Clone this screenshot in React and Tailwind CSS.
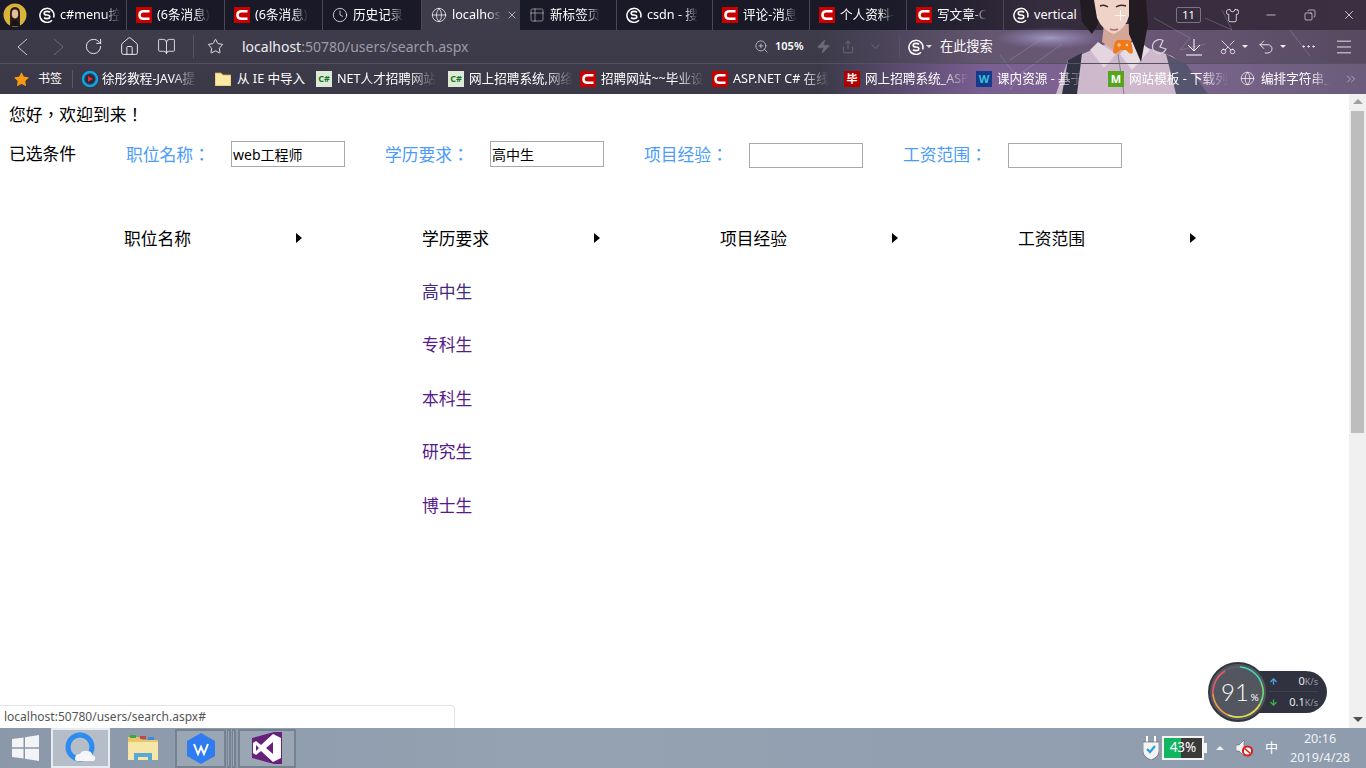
import React from "react";
import {
  ChevronDown,
  ChevronsRight,
  RotateCw,
  Home,
  BookOpen,
  Star,
  ZoomIn,
  Zap,
  Share,
  Scissors,
  Undo2,
  Ellipsis,
  Menu,
  Shirt,
  Minus,
  Copy,
  X,
  Plus,
  Globe,
  Clock,
  Table2,
  ArrowUp,
  ArrowDown,
} from "lucide-react";

const font = "font-['Noto_Sans','Noto_Sans_CJK_SC',sans-serif]";
const cjkTc = "font-['Noto_Sans_CJK_TC',sans-serif]";
const fade = "[mask-image:linear-gradient(90deg,#000_72%,transparent)]";

function CLogo() {
  return (
    <svg width="16" height="16" viewBox="0 0 16 16" className="shrink-0">
      <rect width="16" height="16" fill="#c90000" />
      <path d="M13.5 4.2H7.5Q3.5 4.2 3.5 8T7.5 11.8H13.5" fill="none" stroke="#fff" strokeWidth="2.6" />
    </svg>
  );
}

function SogouLogo() {
  return (
    <svg width="16" height="16" viewBox="0 0 16 16" className="shrink-0">
      <path d="M13 13.2A7 7 0 1 1 14.6 10.5" fill="none" stroke="#fff" strokeWidth="1.5" />
      <path d="M11 5.4Q10 4.4 8 4.4Q5.2 4.4 5.2 6.2T8 8T10.8 9.8T8 11.6Q6 11.6 5 10.6" fill="none" stroke="#fff" strokeWidth="1.6" />
    </svg>
  );
}

function Tab({ icon, text, active, width }) {
  return (
    <div
      className={`flex h-full shrink-0 items-center gap-[5px] border-r pl-[9px] text-[12.6px] text-white ${width} ${
        active ? "border-transparent bg-[#3e3c4b]" : "border-[#4a4855]"
      }`}
    >
      {icon}
      <span className={`whitespace-nowrap ${fade}`}>{text}</span>
      {active && <X size={12} strokeWidth={1.2} className="mr-[7px] ml-auto shrink-0" />}
    </div>
  );
}

function Avatar() {
  return (
    <svg width="24" height="24" viewBox="0 0 24 24" className="mx-[3px] shrink-0">
      <circle cx="12" cy="12" r="11.5" fill="#d8b43a" />
      <path d="M7 23V10Q7 4 12 4T17 10V23Z" fill="#2c2018" />
      <ellipse cx="12" cy="11" rx="3.2" ry="4.4" fill="#e7bda0" />
      <path d="M8 23L9.5 17H14.5L16 23Z" fill="#1a1416" />
    </svg>
  );
}

function Tabs() {
  return (
    <div className="flex h-[30px] items-center">
      <Avatar />
      <Tab width="w-[97px]" icon={<SogouLogo />} text="c#menu控" />
      <Tab width="w-[98px]" icon={<CLogo />} text="(6条消息)" />
      <Tab width="w-[98px]" icon={<CLogo />} text="(6条消息)" />
      <Tab width="w-[99px]" icon={<Clock size={16} strokeWidth={1.1} className="shrink-0" />} text="历史记录" />
      <Tab width="w-[98px]" active icon={<Globe size={16} strokeWidth={1.1} className="shrink-0" />} text="localhos" />
      <Tab width="w-[97px]" icon={<Table2 size={16} strokeWidth={1} className="shrink-0 opacity-70" />} text="新标签页" />
      <Tab width="w-[96px]" icon={<SogouLogo />} text="csdn - 搜" />
      <Tab width="w-[97px]" icon={<CLogo />} text="评论-消息" />
      <Tab width="w-[97px]" icon={<CLogo />} text="个人资料-" />
      <Tab width="w-[97px]" icon={<CLogo />} text="写文章-C" />
      <div className="flex h-full w-[97px] shrink-0 items-center gap-[5px] pl-[9px] text-[12.6px] text-white">
        <SogouLogo />
        <span className="whitespace-nowrap">vertical</span>
      </div>
      <Plus size={17} strokeWidth={1.2} className="ml-[11px] shrink-0 text-white" />
      <div className="ml-[47px] flex h-[16px] w-[25px] items-center justify-center rounded-[2px] border border-[#7d7385] text-[11px] text-white">
        11
      </div>
      <Shirt size={15} strokeWidth={1.2} className="ml-[24px] text-white" />
      <Minus size={14} strokeWidth={1.1} className="ml-[24px] text-white" />
      <Copy size={12} strokeWidth={1.2} className="ml-[26px] -scale-x-100 text-white" />
      <X size={14} strokeWidth={1.2} className="ml-[26px] text-white" />
    </div>
  );
}

function Chevron({ flip, className }) {
  return (
    <svg width="11" height="18" viewBox="0 0 11 18" className={className}>
      <path d={flip ? "M1 1L10 9L1 17" : "M10 1L1 9L10 17"} fill="none" stroke="currentColor" strokeWidth="1" />
    </svg>
  );
}

function Toolbar() {
  return (
    <div className="flex h-[34px] items-center border-b border-[#55535f] text-white">
      <Chevron className="ml-[17px] text-[#c8c8ce]" />
      <Chevron flip className="ml-[25px] text-[#6a6a74]" />
      <RotateCw size={19} strokeWidth={1.1} className="ml-[20px]" />
      <Home size={21} strokeWidth={1} className="ml-[16px]" />
      <BookOpen size={19} strokeWidth={1} className="ml-[17px]" />
      <div className="ml-[17px] h-[23px] w-px bg-[#55535f]" />
      <Star size={17} strokeWidth={1.2} className="ml-[13px]" />
      <div className="ml-[18px] w-[300px] text-[14px] whitespace-nowrap text-[#9c9ba6]">
        <span className="text-[#eeeef0]">localhost</span>:50780/users/search.aspx
      </div>
      <ZoomIn size={15} strokeWidth={1.1} className="ml-[212px] text-[#dcdcdf]" />
      <span className="ml-[6px] w-[32px] text-[11px] font-semibold whitespace-nowrap">105%</span>
      <Zap size={15} strokeWidth={1} fill="#6e6c78" className="ml-[9px] text-[#6e6c78]" />
      <Share size={14} strokeWidth={1} className="ml-[10px] text-[#85838d]" />
      <ChevronDown size={15} strokeWidth={1} className="ml-[13px] text-[#85838d]" />
      <div className="ml-[16px] h-[23px] w-px bg-[#55535f]" />
      <div className="ml-[8px]">
        <SogouLogo />
      </div>
      <div className="ml-[2px] h-0 w-0 border-x-[3px] border-t-[3px] border-x-transparent border-t-[#dddddd]" />
      <span className="ml-[8px] text-[13.2px] whitespace-nowrap">在此搜索</span>
      <svg width="20" height="16" viewBox="0 0 20 16" className="ml-[120px]">
        <path d="M5 1H15Q18 1 19 7L20 13Q19 16 16 14L13 11H7L4 14Q1 16 0 13L1 7Q2 1 5 1Z" fill="#f07a18" />
        <path d="M4 6H8M6 4V8" stroke="#ffd8a8" strokeWidth="1" />
        <circle cx="14" cy="6" r="1.2" fill="#ffd8a8" />
      </svg>
      <svg width="18" height="18" viewBox="0 0 18 18" className="ml-[17px]">
        <path d="M13 2.5A7 7 0 1 0 16 11L10 9Z" fill="none" stroke="#d8d4de" strokeWidth="1.2" />
      </svg>
      <svg width="18" height="18" viewBox="0 0 18 18" className="ml-[17px]">
        <path d="M9 1V12M3 7L9 13L15 7M1 17H17" fill="none" stroke="#fff" strokeWidth="1" />
      </svg>
      <Scissors size={18} strokeWidth={1} className="ml-[16px] -rotate-90" />
      <div className="ml-[5px] h-0 w-0 border-x-[3px] border-t-[3px] border-x-transparent border-t-[#eeeeee]" />
      <Undo2 size={18} strokeWidth={1.1} className="ml-[9px]" />
      <div className="ml-[5px] h-0 w-0 border-x-[3px] border-t-[3px] border-x-transparent border-t-[#eeeeee]" />
      <Ellipsis size={17} strokeWidth={1.2} className="ml-[14px]" />
      <Menu size={20} strokeWidth={1} className="ml-[17px]" />
    </div>
  );
}

function Mark({ bg, children, color = "text-white" }) {
  return (
    <span className={`flex h-[16px] w-[16px] shrink-0 items-center justify-center text-[11px] font-bold ${bg} ${color}`}>
      {children}
    </span>
  );
}

function CsMark() {
  return (
    <span className="flex h-[16px] w-[16px] shrink-0 items-center justify-center bg-[#dfe9d8] text-[9px] font-bold text-[#1a7a2a]">
      C#
    </span>
  );
}

function Bookmark({ icon, text }) {
  return (
    <div className="flex w-[132px] shrink-0 items-center gap-[5px] text-[12.6px] text-white">
      {icon}
      <span className={`whitespace-nowrap ${fade}`}>{text}</span>
    </div>
  );
}

function Bookmarks() {
  return (
    <div className="flex h-[30px] items-center">
      <Star size={17} fill="#f59a12" strokeWidth={0} className="ml-[13px] shrink-0" />
      <span className="ml-[8px] w-[24px] text-[12px] text-white">书签</span>
      <div className="mx-[10px] h-[18px] w-px bg-[#5a5864]" />
      <svg width="16" height="16" viewBox="0 0 16 16" className="ml-[-1px] shrink-0">
        <circle cx="8" cy="8" r="7" fill="none" stroke="#0aa5ea" strokeWidth="2.4" />
        <circle cx="8" cy="8" r="4.5" fill="#2a2a38" />
        <path d="M6 5L11 8L6 11Z" fill="#e8283c" />
      </svg>
      <span className={`ml-[4px] w-[96px] text-[12.6px] whitespace-nowrap text-white ${fade}`}>徐彤教程-JAVA提</span>
      <svg width="16" height="14" viewBox="0 0 16 14" className="ml-[17px] shrink-0">
        <path d="M0 1H6L8 3H16V14H0Z" fill="#fbe9a6" stroke="#d8a93e" strokeWidth="0.8" />
      </svg>
      <span className="ml-[6px] w-[79px] text-[12.6px] whitespace-nowrap text-white">从 IE 中导入</span>
      <Bookmark icon={<CsMark />} text="NET人才招聘网站" />
      <Bookmark icon={<CsMark />} text="网上招聘系统,网络" />
      <Bookmark icon={<CLogo />} text="招聘网站~~毕业设" />
      <Bookmark icon={<CLogo />} text="ASP.NET C# 在线" />
      <Bookmark icon={<Mark bg="bg-[#b00000]">毕</Mark>} text="网上招聘系统_ASP" />
      <Bookmark icon={<Mark bg="bg-[#143a8c]" color="text-[#39c2d8]">W</Mark>} text="课内资源 - 基于" />
      <Bookmark icon={<Mark bg="bg-[#55a51c]">M</Mark>} text="网站模板 - 下载列" />
      <div className="flex w-[91px] shrink-0 items-center gap-[6px] text-[12.6px] text-white">
        <Globe size={15} strokeWidth={1.1} className="shrink-0" />
        <span className={`whitespace-nowrap ${fade}`}>编排字符串_</span>
      </div>
      <ChevronsRight size={14} strokeWidth={1} className="ml-[13px] shrink-0 text-[#dddddd]" />
    </div>
  );
}

// the skin picture behind the right end of the browser bars
function SkinArt() {
  return (
    <svg viewBox="0 0 1366 94" className="pointer-events-none absolute inset-0 h-[94px] w-[1366px]">
      <defs>
        <linearGradient id="tabTint" x1="0" x2="1">
          <stop offset="0" stopColor="#2a2535" stopOpacity="0" />
          <stop offset="0.35" stopColor="#352c3e" />
          <stop offset="1" stopColor="#3c2f42" />
        </linearGradient>
        <linearGradient id="barTint" x1="0" x2="1">
          <stop offset="0" stopColor="#5e5070" stopOpacity="0" />
          <stop offset="0.3" stopColor="#645670" />
          <stop offset="0.55" stopColor="#6c5878" />
          <stop offset="1" stopColor="#554a60" />
        </linearGradient>
        <linearGradient id="lowTint" x1="0" x2="1">
          <stop offset="0" stopColor="#7a5a98" stopOpacity="0" />
          <stop offset="0.3" stopColor="#7a5f92" />
          <stop offset="0.6" stopColor="#7d6690" />
          <stop offset="1" stopColor="#6a5c7a" />
        </linearGradient>
        <radialGradient id="glow">
          <stop offset="0" stopColor="#c8c4f4" stopOpacity="0.6" />
          <stop offset="1" stopColor="#a89ce0" stopOpacity="0" />
        </radialGradient>
        <filter id="soft">
          <feGaussianBlur stdDeviation="0.6" />
        </filter>
      </defs>
      <rect x="860" y="0" width="506" height="30" fill="url(#tabTint)" />
      <rect x="820" y="30" width="546" height="34" fill="url(#barTint)" />
      <rect x="820" y="64" width="546" height="30" fill="url(#lowTint)" />
      <ellipse cx="1050" cy="38" rx="55" ry="11" fill="url(#glow)" />
      <g opacity="0.45" stroke="#b5a6c8" strokeWidth="0.7" fill="none">
        <path d="M1010 60L1040 40M1020 74L1062 44M1154 18L1190 38L1180 50L1205 44" />
        <path d="M1000 55L1018 78L1010 90M1290 30L1310 56M1205 18L1232 30L1222 10" />
      </g>
      <g filter="url(#soft)">
        {/* jacket and shirt */}
        <path d="M1056 94L1068 60L1106 44H1136L1172 56L1190 70L1204 94Z" fill="#cdb9cb" />
        <path d="M1166 54L1186 64L1208 94H1176Z" fill="#54546f" />
        <path d="M1062 94L1068 60L1082 53L1077 94Z" fill="#333345" />
        {/* collar */}
        <path d="M1098 42L1116 54L1104 68L1090 50Z" fill="#e4d6de" />
        <path d="M1136 38L1120 54L1132 70L1150 50Z" fill="#e8dce4" />
        <path d="M1118 54L1124 94" stroke="#8d7a90" strokeWidth="1" />
        {/* neck */}
        <path d="M1104 24H1130L1134 38L1119 54L1102 42Z" fill="#d3a698" />
        {/* hair */}
        <path d="M1080 0H1146L1148 24L1141 62L1129 34L1128 0H1098L1098 24L1092 34L1082 22Z" fill="#221b21" />
        {/* face */}
        <path d="M1094 0H1129L1129 16Q1126 28 1114 34Q1102 30 1097 18Z" fill="#efd3c8" />
        <path d="M1100 6Q1104 4 1108 7M1116 7Q1120 4 1126 6" stroke="#3a2a2e" strokeWidth="1.5" fill="none" />
        <path d="M1110 29Q1114 31 1118 29" stroke="#b8666e" strokeWidth="1.6" fill="none" />
      </g>
    </svg>
  );
}

function Field({ label, value, low }) {
  return (
    <div className="flex w-[259px] shrink-0 items-start">
      <span className={`w-[105px] text-[16.8px] leading-[26px] text-[#4a9bfa] ${cjkTc}`}>{label}</span>
      <input
        readOnly
        value={value}
        className={`w-[113.6px] border border-[#a9a9a9] bg-white pl-[1px] text-[14px] text-black outline-none ${
          low ? "mt-[2px] h-[25px]" : "h-[26px]"
        }`}
      />
    </div>
  );
}

function Caret() {
  return <div className="-mt-[1px] h-0 w-0 border-y-[5px] border-l-[6px] border-y-transparent border-l-black" />;
}

const menus = [
  { name: "职位名称", items: [] },
  { name: "学历要求", items: ["高中生", "专科生", "本科生", "研究生", "博士生"] },
  { name: "项目经验", items: [] },
  { name: "工资范围", items: [] },
];

function Menus() {
  return (
    <div className="mt-[58px] ml-[124px] flex">
      {menus.map((menu) => (
        <div key={menu.name} className="w-[298px] shrink-0">
          <div className="flex h-[25px] w-[178px] items-center justify-between text-[16.8px] text-black">
            {menu.name}
            <Caret />
          </div>
          {menu.items.map((item, i) => (
            <a
              key={item}
              href="#"
              className={`mt-[27.5px] flex h-[26px] items-center text-[16.8px] ${i === 0 ? "text-[#3f2a80]" : "text-[#551a8b]"}`}
            >
              {item}
            </a>
          ))}
        </div>
      ))}
    </div>
  );
}

function Scrollbar() {
  return (
    <div className="flex w-[17px] shrink-0 flex-col items-center bg-[#f0f0f0]">
      <div className="mt-[5px] h-0 w-0 border-x-[5px] border-b-[5px] border-x-transparent border-b-[#a0a0a0]" />
      <div className="mt-[7px] h-[322px] w-[13px] bg-[#bdbdbd]" />
      <div className="mt-auto mb-[6px] h-0 w-0 border-x-[5px] border-t-[5px] border-x-transparent border-t-[#505050]" />
    </div>
  );
}

function SpeedWidget() {
  return (
    <div className="absolute top-[568px] left-[1208px] h-[60px] w-[120px]">
      <div className="absolute top-[9px] left-[46px] flex h-[42px] w-[73px] flex-col rounded-r-[21px] bg-[#30333f] pr-[9px] pl-[15px] text-[#e8e8ea]">
        <div className="flex h-[21px] items-center justify-between border-b border-[#3f424e] text-[11px]">
          <ArrowUp size={9} strokeWidth={3.5} className="text-[#4aa8e8]" />
          <span>
            0<span className="text-[9px] text-[#9a9ca6]">K/s</span>
          </span>
        </div>
        <div className="flex h-[21px] items-center justify-between text-[11px]">
          <ArrowDown size={9} strokeWidth={3.5} className="text-[#3db04a]" />
          <span>
            0.1<span className="text-[9px] text-[#9a9ca6]">K/s</span>
          </span>
        </div>
      </div>
      <svg width="60" height="60" viewBox="0 0 60 60" className="absolute top-0 left-0">
        <circle cx="30" cy="30" r="29" fill="#53565f" stroke="#34363e" strokeWidth="2" />
        <circle cx="30" cy="30" r="25" fill="none" stroke="#6a6d75" strokeWidth="0.8" />
        <path d="M32 5A25 25 0 0 1 53 20" fill="none" stroke="#3fd6c0" strokeWidth="1.6" />
        <path d="M53 20A25 25 0 0 1 52 42" fill="none" stroke="#6fdc7c" strokeWidth="1.6" />
        <path d="M52 42A25 25 0 0 1 20 53" fill="none" stroke="#e4dc52" strokeWidth="1.6" />
        <path d="M20 53A25 25 0 0 1 5 32" fill="none" stroke="#ee9c4a" strokeWidth="1.6" />
        <path d="M5 32A25 25 0 0 1 17 9" fill="none" stroke="#e85a6c" strokeWidth="1.6" />
      </svg>
      <div className="absolute top-[15px] left-[13px] flex items-baseline font-['Lato',sans-serif] text-white">
        <span className="text-[24px] leading-[30px] font-light">91</span>
        <span className="ml-[2px] text-[10px]">%</span>
      </div>
    </div>
  );
}

function Page() {
  return (
    <div className="relative flex min-h-0 flex-1 bg-white">
      <div className="min-w-0 flex-1 overflow-hidden">
        <div className={`mt-[8px] ml-[9px] h-[24px] text-[16.8px] leading-[24px] text-black ${cjkTc}`}>您好，欢迎到来！</div>
        <div className="mt-[15px] flex items-start pl-[9px]">
          <span className="w-[117px] shrink-0 text-[16.8px] leading-[26px] text-black">已选条件</span>
          <Field label="职位名称：" value="web工程师" />
          <Field label="学历要求：" value="高中生" />
          <Field label="项目经验：" value="" low />
          <Field label="工资范围：" value="" low />
        </div>
        <Menus />
      </div>
      <Scrollbar />
      <SpeedWidget />
      <div className="absolute bottom-0 left-0 h-[23px] w-[455px] rounded-tr-[4px] border-t border-r border-[#e4e4e4] bg-white pl-[4px] text-[12px] leading-[22px] text-[#555555]">
        localhost:50780/users/search.aspx#
      </div>
    </div>
  );
}

function Taskbar() {
  return (
    <div className="flex h-[40px] shrink-0 items-center bg-[linear-gradient(90deg,#8b98a9,#95a2b2_40%,#8f9cad)] text-white">
      <svg width="27" height="26" viewBox="0 0 27 26" className="ml-[12px] shrink-0">
        <path d="M0 4L11.5 2.4V12.2H0ZM13 2.2L27 0V12.2H13ZM0 13.8H11.5V23.6L0 22ZM13 13.8H27V26L13 23.8Z" fill="#f2f4f6" />
      </svg>
      <div className="ml-[12px] flex h-[40px] w-[59px] items-center justify-center border-2 border-[#e8ecf0] bg-[#b4bdc8]">
        <svg width="32" height="32" viewBox="0 0 32 32">
          <circle cx="15" cy="15" r="12" fill="none" stroke="#2c8cf0" strokeWidth="5" />
          <path d="M10 27Q10 22 15 22Q17 18 22 19Q27 19 27 23Q31 24 30 27Q30 29 27 29H13Q10 29 10 27Z" fill="#f4f6fa" />
        </svg>
      </div>
      <svg width="32" height="32" viewBox="0 0 32 32" className="ml-[17px] shrink-0">
        <path d="M1 5H12L15 8H31V28H1Z" fill="#e8c766" />
        <rect x="3" y="3" width="6" height="3" fill="#3aa84a" />
        <rect x="13" y="4" width="6" height="3" fill="#c8483a" />
        <rect x="21" y="5" width="6" height="3" fill="#3a8ae0" />
        <path d="M1 10H31V28H1Z" fill="#f6e6a8" />
        <path d="M7 29V21H25V29H21V25H11V29Z" fill="#5aa8d8" />
      </svg>
      <div className="ml-[16px] flex h-[39px] w-[51px] items-center justify-center border-2 border-[#76828f] bg-[#9aa6b4]">
        <svg width="28" height="31" viewBox="0 0 28 31">
          <path d="M14 0L28 8V23L14 31L0 23V8Z" fill="#2f7cf0" />
          <path d="M7 11L11 21L14 14L17 21L21 11" fill="none" stroke="#fff" strokeWidth="2" />
        </svg>
      </div>
      <div className="ml-[1px] h-[39px] w-[4px] border-2 border-l-[1px] border-[#76828f] bg-[#9aa6b4]" />
      <div className="ml-[1px] h-[39px] w-[4px] border-2 border-l-[1px] border-[#76828f] bg-[#9aa6b4]" />
      <div className="ml-[2px] flex h-[39px] w-[58px] items-center justify-center border-2 border-[#76828f] bg-[#9aa6b4]">
        <svg width="30" height="32" viewBox="0 0 30 32">
          <path d="M0 0H30V32H0Z" fill="#68217a" />
          <path d="M0 0H22L0 6ZM0 32V26L22 32Z" fill="#9aa6b4" />
          <path d="M21 2L29 6V26L21 30L9 19L4 23L1 21V11L4 9L9 13ZM21 10L14 16L21 22ZM4 13V19L7 16Z" fill="#fff" fillRule="evenodd" />
        </svg>
      </div>
      <svg width="16" height="24" viewBox="0 0 16 24" className="ml-auto shrink-0">
        <path d="M4 0V6M12 0V6" stroke="#fff" strokeWidth="2" />
        <path d="M0 6H16V15Q16 21 8 24Q0 21 0 15Z" fill="#f4f4f4" stroke="#555" strokeWidth="0.6" />
        <path d="M4 13L7 16L12 10" fill="none" stroke="#2a9fd8" strokeWidth="2.2" />
      </svg>
      <div className="ml-[3px] flex h-[24px] w-[42px] items-center border-2 border-[#f4f4f4] bg-[#3a3a3a]">
        <div className="relative flex h-full w-full items-center justify-center bg-[linear-gradient(90deg,#12b560_45%,#3a3a3a_45%)] text-[13.5px] leading-none">
          43%
        </div>
      </div>
      <div className="h-[10px] w-[3px] bg-[#f4f4f4]" />
      <div className="ml-[9px] h-0 w-0 border-x-[4px] border-b-[4px] border-x-transparent border-b-[#f0f2f4]" />
      <svg width="17" height="18" viewBox="0 0 17 18" className="ml-[12px] shrink-0">
        <path d="M0 6H3L8 1V17L3 12H0Z" fill="#f0f0f0" stroke="#555" strokeWidth="0.5" />
        <circle cx="11.5" cy="12" r="4.6" fill="#fff" stroke="#d81e1e" strokeWidth="2" />
        <path d="M8.5 9.5L14.5 14.5" stroke="#d81e1e" strokeWidth="1.6" />
      </svg>
      <span className="ml-[12px] text-[13px]">中</span>
      <div className="ml-[13px] mr-[17px] flex w-[58px] flex-col items-center text-[12.6px] leading-[19px] text-[#eef1f4]">
        <span>20:16</span>
        <span className="whitespace-nowrap">2019/4/28</span>
      </div>
    </div>
  );
}

export default function App() {
  return (
    <div className={`flex h-screen w-full flex-col overflow-hidden bg-white ${font}`}>
      <div className="relative h-[94px] shrink-0 bg-[linear-gradient(180deg,#191928_0,#191928_30px,#3e3c4b_30px,#3b3948_94px)]">
        <SkinArt />
        <div className="relative">
          <Tabs />
          <Toolbar />
          <Bookmarks />
        </div>
      </div>
      <Page />
      <Taskbar />
    </div>
  );
}
